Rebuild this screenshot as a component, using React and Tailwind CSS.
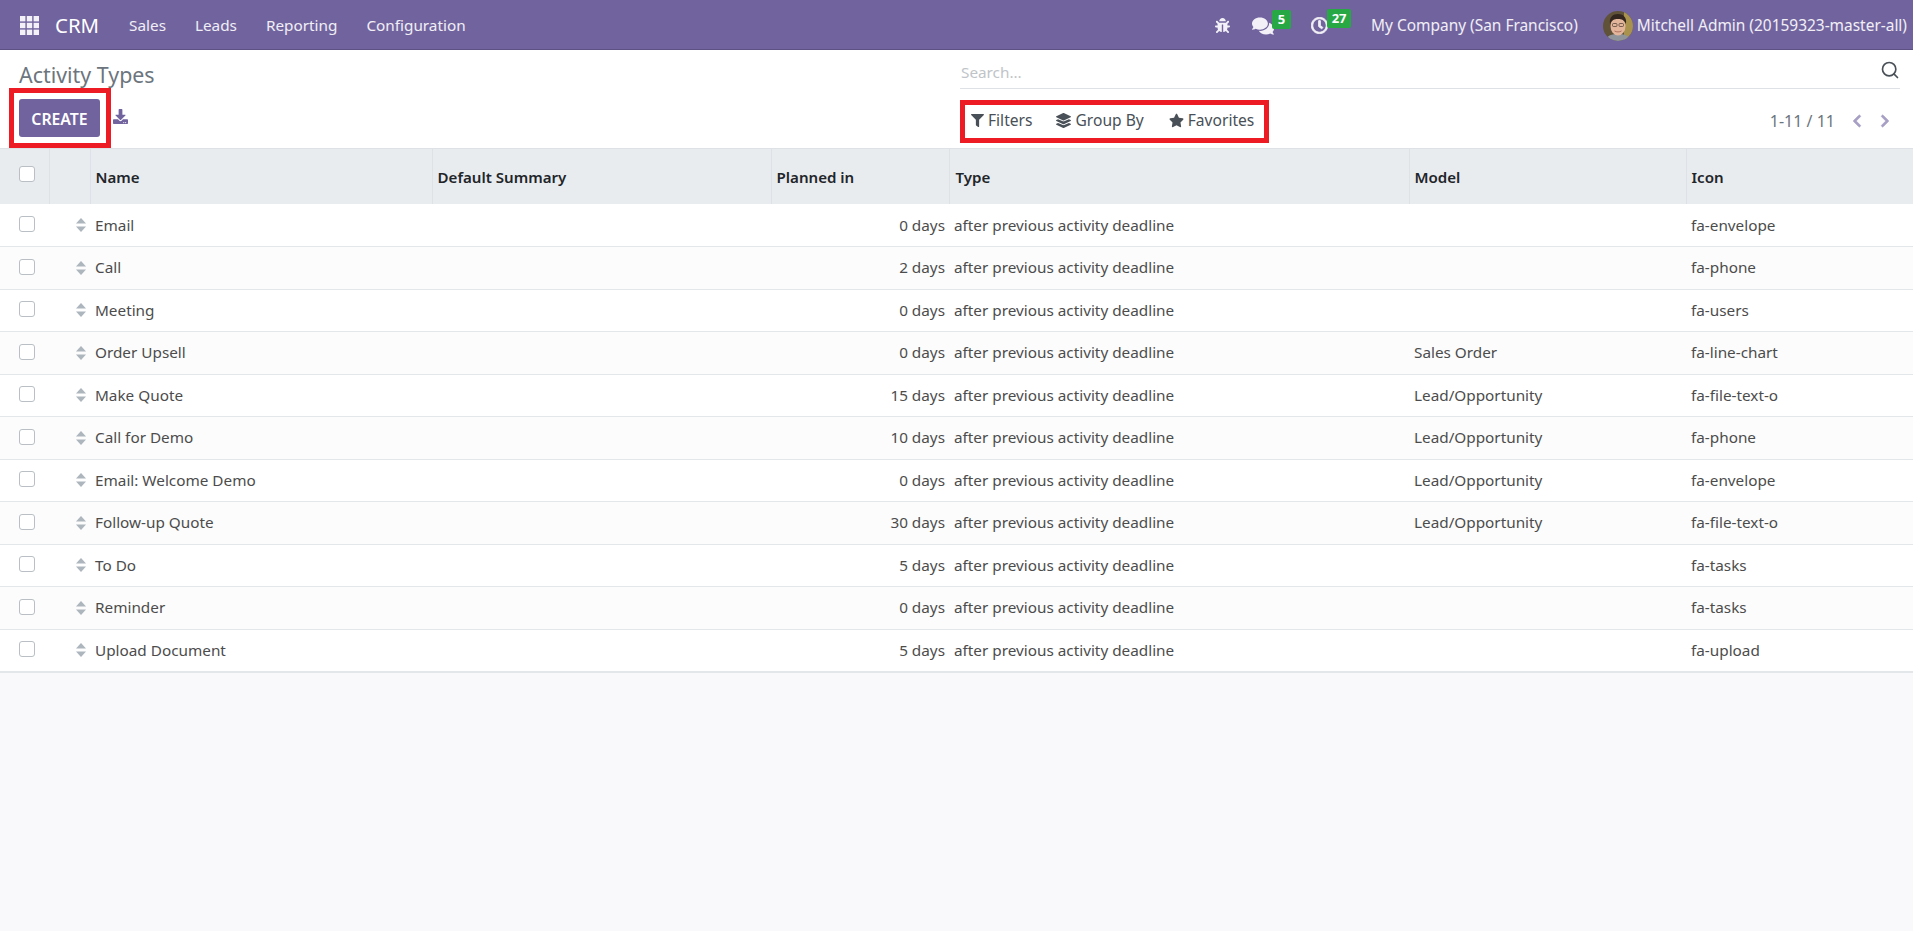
import React from 'react';
import { FaBug, FaComments, FaFilter, FaLayerGroup, FaStar, FaDownload, FaChevronLeft, FaChevronRight, FaRegClock } from 'react-icons/fa';
import { Search } from 'lucide-react';

const rows = [
  ['Email', '0 days', '', 'fa-envelope'],
  ['Call', '2 days', '', 'fa-phone'],
  ['Meeting', '0 days', '', 'fa-users'],
  ['Order Upsell', '0 days', 'Sales Order', 'fa-line-chart'],
  ['Make Quote', '15 days', 'Lead/Opportunity', 'fa-file-text-o'],
  ['Call for Demo', '10 days', 'Lead/Opportunity', 'fa-phone'],
  ['Email: Welcome Demo', '0 days', 'Lead/Opportunity', 'fa-envelope'],
  ['Follow-up Quote', '30 days', 'Lead/Opportunity', 'fa-file-text-o'],
  ['To Do', '5 days', '', 'fa-tasks'],
  ['Reminder', '0 days', '', 'fa-tasks'],
  ['Upload Document', '5 days', '', 'fa-upload'],
];

function Checkbox() {
  return <span className="block w-[16px] h-[16px] rounded-[3px] border border-[#b9bfc5] bg-white -mt-[2px]" />;
}

function SortHandle() {
  return (
    <svg width="10" height="14" viewBox="0 0 10 14" fill="#adb5bd" className="block ml-auto mr-[4px]">
      <path d="M5 0l5 5.5H0z" />
      <path d="M5 14l5-5.5H0z" />
    </svg>
  );
}

function Avatar() {
  return (
    <svg width="30" height="30" viewBox="0 0 30 30" className="rounded-full shrink-0">
      <rect width="30" height="30" fill="#5f5238" />
      <rect x="21" width="9" height="30" fill="#a8924e" />
      <path d="M2 30c2-6 7-7 13-7s11 1 13 7z" fill="#8f959b" />
      <ellipse cx="15" cy="15" rx="7.5" ry="9.5" fill="#e3b59b" />
      <path d="M7 13c-1-7 3-10 8-10s9 3 8 10c-2-4-4-5-8-5s-6 1-8 5z" fill="#33261e" />
      <rect x="9.5" y="12.5" width="4.5" height="3" rx="1" fill="none" stroke="#4a3a30" strokeWidth="0.7" />
      <rect x="16" y="12.5" width="4.5" height="3" rx="1" fill="none" stroke="#4a3a30" strokeWidth="0.7" />
      <path d="M11.5 20c2 1.2 5 1.2 7 0" fill="none" stroke="#a86a58" strokeWidth="0.9" />
    </svg>
  );
}

function Badge({ className, children }) {
  return (
    <span className={`absolute h-[19px] rounded-[2px] bg-[#28a745] text-white text-center text-[13px] leading-[18px] font-bold ${className}`}>
      {children}
    </span>
  );
}

function App() {
  return (
    <div className="h-[931px] flex flex-col bg-[#f9f9fb] text-[#4c4c4c] font-['Noto_Sans','Open_Sans',sans-serif] text-[15.3px] overflow-hidden">
      {/* Navbar */}
      <nav className="h-[50px] shrink-0 bg-[#71639e] border-b border-[#5d5184] flex items-center text-white pl-[20px] pr-[6px] pt-[2px]">
        <svg width="19" height="19" viewBox="0 0 19 19" fill="#f3f1f7" className="mr-[16px]">
          <rect x="0" y="0" width="5.4" height="5.4" /><rect x="6.8" y="0" width="5.4" height="5.4" /><rect x="13.6" y="0" width="5.4" height="5.4" />
          <rect x="0" y="6.8" width="5.4" height="5.4" /><rect x="6.8" y="6.8" width="5.4" height="5.4" /><rect x="13.6" y="6.8" width="5.4" height="5.4" />
          <rect x="0" y="13.6" width="5.4" height="5.4" /><rect x="6.8" y="13.6" width="5.4" height="5.4" /><rect x="13.6" y="13.6" width="5.4" height="5.4" />
        </svg>
        <span className="text-[20.4px] mr-[30px]">CRM</span>
        <div className="flex gap-[29px] text-white/90">
          <span>Sales</span>
          <span>Leads</span>
          <span>Reporting</span>
          <span>Configuration</span>
        </div>
        <div className="ml-auto flex items-center text-[15.45px]">
          <FaBug className="text-[15px] text-[#f3f1f7] mr-[22px]" />
          <span className="relative mr-[37px]">
            <FaComments className="text-[22px] text-[#f3f1f7]" />
            <Badge className="-top-[5px] left-[20px] w-[19px]">5</Badge>
          </span>
          <span className="relative mr-[43px]">
            <FaRegClock className="text-[17px] text-[#f3f1f7]" strokeWidth="25" />
            <Badge className="-top-[8px] left-[16px] w-[24px]">27</Badge>
          </span>
          <span className="text-white/90 mr-[25px]">My Company (San Francisco)</span>
          <Avatar />
          <span className="text-white/90 ml-[4px]">Mitchell Admin (20159323-master-all)</span>
        </div>
      </nav>

      {/* Control panel */}
      <div className="relative h-[99px] shrink-0 bg-white border-b border-[#dee2e6] flex">
        <div className="w-[960px] shrink-0 pl-[19px]">
          <h1 className="text-[21.4px] leading-[30px] mt-[10px] text-[#6c757d]">Activity Types</h1>
          <div className="flex items-center mt-[9px]">
            <button className="h-[38px] w-[81px] pt-[3px] rounded-[3px] bg-[#71639e] text-white text-[15.8px] font-semibold">CREATE</button>
            <FaDownload className="ml-[13px] text-[15px] text-[#71639e] -mt-[3px]" />
          </div>
        </div>
        <div className="flex-1 pr-[13px]">
          <div className="h-[39px] border-b border-[#dee2e6] flex items-center justify-between text-[#c0c4c8] pt-[7px]">
            <span className="pl-[1px]">Search...</span>
            <Search size={20} strokeWidth={2} className="text-[#495057] -mt-[6px]" />
          </div>
          <div className="flex items-center mt-[20px]">
            <span className="flex items-center ml-[11px] text-[15.6px] text-[#495057]">
              <FaFilter className="text-[13px] mr-[4px]" />Filters
            </span>
            <span className="flex items-center ml-[24px] text-[15.6px] text-[#495057]">
              <FaLayerGroup className="text-[15px] mr-[4px]" />Group By
            </span>
            <span className="flex items-center ml-[25px] text-[15.6px] text-[#495057]">
              <FaStar className="text-[15px] mr-[4px]" />Favorites
            </span>
            <span className="ml-auto text-[16px] text-[#6c757d] mr-[15px]">1-11 / 11</span>
            <FaChevronLeft className="text-[14px] text-[#a79fc4] mr-[14px]" strokeWidth="25" />
            <FaChevronRight className="text-[14px] text-[#a79fc4] mr-[8px]" strokeWidth="25" />
          </div>
        </div>
        {/* annotation boxes */}
        <div className="absolute left-[9px] top-[38px] w-[102px] h-[60px] border-[5px] border-[#ed1c24]" />
        <div className="absolute left-[960px] top-[50px] w-[309px] h-[43px] border-[5px] border-[#ed1c24]" />
      </div>

      {/* List */}
      <table className="w-full table-fixed border-collapse bg-white">
        <colgroup>
          <col className="w-[49px]" />
          <col className="w-[41px]" />
          <col className="w-[342px]" />
          <col className="w-[339px]" />
          <col className="w-[178px]" />
          <col className="w-[460px]" />
          <col className="w-[277px]" />
          <col />
        </colgroup>
        <thead>
          <tr className="h-[55px] bg-[#e9ecef] text-[#212529] text-[15.1px] text-left">
            <th className="pl-[19px] pb-[3px] font-normal"><Checkbox /></th>
            <th className="border-l border-[#dee2e6]" />
            <th className="border-l border-[#dee2e6] pl-[5px] pt-[2px] font-semibold">Name</th>
            <th className="border-l border-[#dee2e6] pl-[5px] pt-[2px] font-semibold">Default Summary</th>
            <th className="border-l border-[#dee2e6] pl-[5px] pt-[2px] font-semibold">Planned in</th>
            <th className="border-l border-[#dee2e6] pl-[6px] pt-[2px] font-semibold">Type</th>
            <th className="border-l border-[#dee2e6] pl-[5px] pt-[2px] font-semibold">Model</th>
            <th className="border-l border-[#dee2e6] pl-[5px] pt-[2px] font-semibold">Icon</th>
          </tr>
        </thead>
        <tbody>
          {rows.map((r, i) => (
            <tr key={r[0]} className={`h-[42.5px] border-b border-[#e4e7ea] last:border-b-2 ${i % 2 ? 'bg-[#fcfcfc]' : 'bg-white'}`}>
              <td className="pl-[19px]"><Checkbox /></td>
              <td><SortHandle /></td>
              <td className="pl-[5px]">{r[0]}</td>
              <td />
              <td className="text-right pr-[4px]">{r[1]}</td>
              <td className="pl-[5px]">after previous activity deadline</td>
              <td className="pl-[5px]">{r[2]}</td>
              <td className="pl-[5px]">{r[3]}</td>
            </tr>
          ))}
        </tbody>
      </table>
    </div>
  );
}

export default App;
